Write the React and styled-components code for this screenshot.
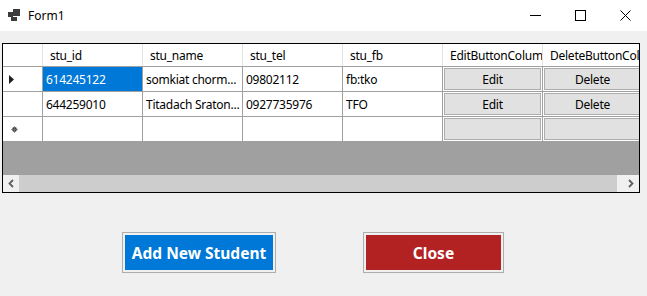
import React from "react";
import styled, { createGlobalStyle } from "styled-components";

const GlobalStyle = createGlobalStyle`
  html, body { margin: 0; padding: 0; }
  body {
    background: #f0f0f0;
    font-family: "Noto Sans", "Open Sans", sans-serif;
  }
`;

const Window = styled.div`
  width: 647px;
  height: 296px;
  background: #f0f0f0;
  overflow: hidden;
  display: flex;
  flex-direction: column;
`;

const TitleBar = styled.div`
  height: 31px;
  background: #ffffff;
  display: flex;
  align-items: center;
  flex-shrink: 0;
`;

const TitleIcon = styled.svg`
  margin-left: 8px;
  margin-top: -1px;
  width: 12px;
  height: 12px;
`;

const TitleText = styled.span`
  margin-left: 8px;
  font-size: 12px;
  color: #000;
  margin-top: -1px;
`;

const Controls = styled.div`
  margin-left: auto;
  margin-right: -1px;
  display: flex;
  height: 100%;
`;

const ControlBox = styled.div`
  width: 45px;
  height: 100%;
  display: flex;
  align-items: center;
  justify-content: center;
`;

const Content = styled.div`
  padding: 12px 0 0 2px;
  display: flex;
  flex-direction: column;
`;

const Grid = styled.div`
  width: 638px;
  height: 150px;
  box-sizing: border-box;
  border: 1px solid #000;
  background: #a0a0a0;
  display: flex;
  flex-direction: column;
  overflow: hidden;
  font-size: 12px;
  letter-spacing: -0.25px;
`;

const Row = styled.div`
  display: grid;
  grid-template-columns: 40px repeat(6, 100px);
  height: ${(p) => (p.$header ? 23 : 25)}px;
  box-sizing: border-box;
  border-bottom: 1px solid #a0a0a0;
  background: #fff;
  flex-shrink: 0;
`;

const HeadCell = styled.div`
  box-sizing: border-box;
  border-right: 1px solid #e3e3e3;
  padding-left: 7px;
  display: flex;
  align-items: center;
  white-space: nowrap;
  overflow: hidden;
  color: #000;
  background: #fff;
`;

const RowHead = styled.div`
  box-sizing: border-box;
  border-right: 1px solid #a0a0a0;
  background: #fff;
  display: flex;
  align-items: center;
  padding-left: ${(p) => p.$pad || 6}px;
`;

const Cell = styled.div`
  box-sizing: border-box;
  border-right: 1px solid #a0a0a0;
  padding-left: 3px;
  display: flex;
  align-items: center;
  white-space: nowrap;
  overflow: hidden;
  background: ${(p) => (p.$selected ? "#0078d7" : "#fff")};
  color: ${(p) => (p.$selected ? "#fff" : "#000")};
`;

const ButtonCell = styled.div`
  box-sizing: border-box;
  border-right: 1px solid #a0a0a0;
  padding: 1px;
  background: #fff;
  display: flex;
`;

const CellButton = styled.div`
  flex: 1;
  box-sizing: border-box;
  border: 1px solid #adadad;
  background: #e1e1e1;
  display: flex;
  align-items: center;
  justify-content: center;
  color: #000;
`;

const Workspace = styled.div`
  flex: 1;
  background: #a0a0a0;
`;

const ScrollBar = styled.div`
  height: 17px;
  flex-shrink: 0;
  background: #f0f0f0;
  display: flex;
`;

const ArrowBox = styled.div`
  width: ${(p) => p.$w}px;
  display: flex;
  align-items: center;
  justify-content: center;
  flex-shrink: 0;
`;

const Thumb = styled.div`
  width: 598px;
  background: #cdcdcd;
  flex-shrink: 0;
`;

const Track = styled.div`
  flex: 1;
`;

const ButtonBar = styled.div`
  display: flex;
  gap: 87px;
  padding: 39px 0 0 120px;
`;

const FormButton = styled.button`
  width: ${(p) => p.$w}px;
  height: 41px;
  box-sizing: border-box;
  border: 1px solid #adadad;
  padding: 2px;
  background: #f0f0f0;
  display: flex;
  cursor: pointer;
`;

const ButtonFill = styled.span`
  flex: 1;
  background: ${(p) => p.$color};
  color: #fff;
  font-family: "Noto Sans", "Open Sans", sans-serif;
  font-weight: 700;
  font-size: 15.5px;
  display: flex;
  align-items: center;
  justify-content: center;
`;

const Chevron = ({ dir }) => (
  <svg width="6" height="9" viewBox="0 0 6 9">
    <polyline
      points={dir === "left" ? "5,1 1.5,4.5 5,8" : "1,1 4.5,4.5 1,8"}
      fill="none"
      stroke="#606060"
      strokeWidth="1.8"
    />
  </svg>
);

const rows = [
  { id: "614245122", name: "somkiat chorm...", tel: "09802112", fb: "fb:tko", current: true },
  { id: "644259010", name: "Titadach Sraton...", tel: "0927735976", fb: "TFO" },
];

export default function App() {
  return (
    <>
      <GlobalStyle />
      <Window>
        <TitleBar>
          <TitleIcon viewBox="0 0 12 12">
            <rect x="0" y="3" width="5" height="5" fill="#3c3c3c" />
            <rect x="5" y="0" width="7" height="7" fill="#3c3c3c" />
            <rect x="3" y="8" width="6" height="4" fill="#3c3c3c" />
          </TitleIcon>
          <TitleText>Form1</TitleText>
          <Controls>
            <ControlBox>
              <svg width="11" height="11" viewBox="0 0 11 11">
                <line x1="0" y1="5.5" x2="11" y2="5.5" stroke="#000" strokeWidth="1" />
              </svg>
            </ControlBox>
            <ControlBox>
              <svg width="11" height="11" viewBox="0 0 11 11">
                <rect x="0.5" y="0.5" width="10" height="10" fill="none" stroke="#000" strokeWidth="1" />
              </svg>
            </ControlBox>
            <ControlBox>
              <svg width="11" height="11" viewBox="0 0 11 11">
                <line x1="0.5" y1="0.5" x2="10.5" y2="10.5" stroke="#000" strokeWidth="1" />
                <line x1="10.5" y1="0.5" x2="0.5" y2="10.5" stroke="#000" strokeWidth="1" />
              </svg>
            </ControlBox>
          </Controls>
        </TitleBar>
        <Content>
          <Grid>
            <Row $header>
              <HeadCell />
              <HeadCell>stu_id</HeadCell>
              <HeadCell>stu_name</HeadCell>
              <HeadCell>stu_tel</HeadCell>
              <HeadCell>stu_fb</HeadCell>
              <HeadCell>EditButtonColumn</HeadCell>
              <HeadCell>DeleteButtonColumn</HeadCell>
            </Row>
            {rows.map((r) => (
              <Row key={r.id}>
                <RowHead>
                  {r.current && (
                    <svg width="5" height="9" viewBox="0 0 5 9">
                      <polygon points="0,0 5,4.5 0,9" fill="#202020" />
                    </svg>
                  )}
                </RowHead>
                <Cell $selected={r.current}>{r.id}</Cell>
                <Cell>{r.name}</Cell>
                <Cell>{r.tel}</Cell>
                <Cell>{r.fb}</Cell>
                <ButtonCell>
                  <CellButton>Edit</CellButton>
                </ButtonCell>
                <ButtonCell>
                  <CellButton>Delete</CellButton>
                </ButtonCell>
              </Row>
            ))}
            <Row>
              <RowHead $pad={8}>
                <svg width="7" height="7" viewBox="0 0 7 7">
                  <circle cx="3.5" cy="3.5" r="2.4" fill="#3a3a3a" />
                  <line x1="3.5" y1="0" x2="3.5" y2="7" stroke="#7a7a7a" strokeWidth="0.8" />
                  <line x1="0" y1="3.5" x2="7" y2="3.5" stroke="#7a7a7a" strokeWidth="0.8" />
                </svg>
              </RowHead>
              <Cell />
              <Cell />
              <Cell />
              <Cell />
              <ButtonCell>
                <CellButton />
              </ButtonCell>
              <ButtonCell>
                <CellButton />
              </ButtonCell>
            </Row>
            <Workspace />
            <ScrollBar>
              <ArrowBox $w={16}>
                <Chevron dir="left" />
              </ArrowBox>
              <Thumb />
              <Track />
              <ArrowBox $w={17}>
                <Chevron dir="right" />
              </ArrowBox>
            </ScrollBar>
          </Grid>
          <ButtonBar>
            <FormButton $w={154}>
              <ButtonFill $color="#0078d7">Add New Student</ButtonFill>
            </FormButton>
            <FormButton $w={141}>
              <ButtonFill $color="#b22222">Close</ButtonFill>
            </FormButton>
          </ButtonBar>
        </Content>
      </Window>
    </>
  );
}
